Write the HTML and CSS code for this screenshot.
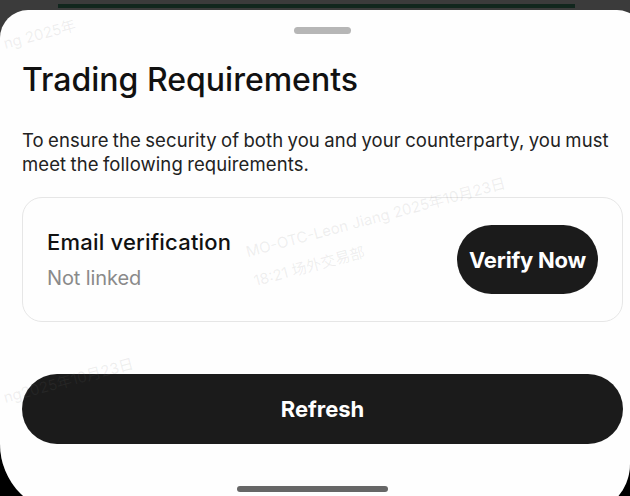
FILE: index.html
```html
<!DOCTYPE html>
<html lang="en">
<head>
    <meta charset="UTF-8">
    <meta name="viewport" content="width=device-width, initial-scale=1.0">
    <title>Trading Requirements</title>
    <link rel="stylesheet" href="styles.css">
</head>
<body>

<div class="screen">
    <div class="status-strip"></div>

    <!-- Bottom sheet -->
    <div class="sheet">
        <div class="handle"></div>

        <h1 class="sheet-title">Trading Requirements</h1>
        <p class="sheet-desc">To ensure the security of both you and your counterparty, you must meet the following requirements.</p>

        <div class="req-card">
            <div class="req-info">
                <div class="req-name">Email verification</div>
                <div class="req-status">Not linked</div>
            </div>
            <button class="verify-btn">Verify Now</button>
        </div>

        <button class="refresh-btn">Refresh</button>

        <div class="home-bar"></div>
    </div>

    <!-- Watermark -->
    <div class="watermark wm-top">ng 2025年</div>
    <div class="watermark wm-mid">MO-OTC-Leon Jiang 2025年10月23日<br>18:21 场外交易部</div>
    <div class="watermark wm-left">ng2025年10月23日</div>
</div>

</body>
</html>
```

FILE: styles.css
```css
html, body {
    margin: 0;
    padding: 0;
    background-color: #000;
    overflow: hidden;
    height: 100%;
}

body {
    font-family: Inter, 'Noto Sans', 'Noto Sans CJK SC', sans-serif;
    color: #151515;
}

.screen {
    position: relative;
    height: 514px;
    background-color: #3b3b3b;
    border-radius: 0 0 50px 70px;
    overflow: hidden;
}

.status-strip {
    height: 4px;
    margin: 4px 55px 0 58px;
    background-color: #11261d;
}

.sheet {
    margin-top: 2px;
    width: calc(100% + 15px);
    height: 504px;
    box-sizing: border-box;
    background-color: #fefefe;
    border-radius: 28px 28px 0 0;
    padding: 17px 22px 0 22px;
    display: flex;
    flex-direction: column;
}

.handle {
    align-self: center;
    width: 57px;
    height: 7px;
    border-radius: 4px;
    background-color: #b6b6b6;
}

.sheet-title {
    margin: 27px 0 0 0;
    font-size: 32px;
    line-height: 38px;
    font-weight: 500;
    letter-spacing: 0;
    color: #111;
}

.sheet-desc {
    margin: 29px 0 0 0;
    font-size: 18.5px;
    line-height: 24px;
    letter-spacing: 0.1px;
    word-spacing: -1px;
    color: #222;
}

.req-card {
    margin-top: 21px;
    height: 125px;
    box-sizing: border-box;
    border: 1px solid #e6e6e6;
    border-radius: 20px;
    padding: 0 24px 0 24px;
    display: flex;
    align-items: center;
    justify-content: space-between;
}

.req-name {
    font-size: 22px;
    font-weight: 500;
    letter-spacing: 0.2px;
    color: #111;
}

.req-status {
    margin-top: 11px;
    font-size: 20px;
    letter-spacing: -0.1px;
    color: #8a8a8a;
}

.verify-btn {
    width: 141px;
    height: 69px;
    border: none;
    border-radius: 35px;
    background-color: #1b1b1b;
    color: #fff;
    font-family: inherit;
    font-size: 22px;
    font-weight: 700;
    letter-spacing: -0.2px;
}

.refresh-btn {
    margin-top: 52px;
    height: 70px;
    border: none;
    border-radius: 35px;
    background-color: #1b1b1b;
    color: #fff;
    font-family: inherit;
    font-size: 22px;
    font-weight: 700;
    letter-spacing: 0;
}

.home-bar {
    align-self: flex-start;
    margin: 42px 0 0 215px;
    width: 151px;
    height: 6px;
    border-radius: 3px;
    background-color: #666;
}

.watermark {
    position: absolute;
    font-size: 15px;
    line-height: 30px;
    color: rgba(120, 120, 120, 0.12);
    transform: rotate(-15deg);
    transform-origin: left bottom;
    white-space: nowrap;
    pointer-events: none;
}

.wm-top {
    left: 6px;
    top: 36px;
    line-height: 16px;
}

.wm-mid {
    left: 258px;
    top: 236px;
}

.wm-left {
    left: 6px;
    top: 390px;
    line-height: 16px;
}
```
